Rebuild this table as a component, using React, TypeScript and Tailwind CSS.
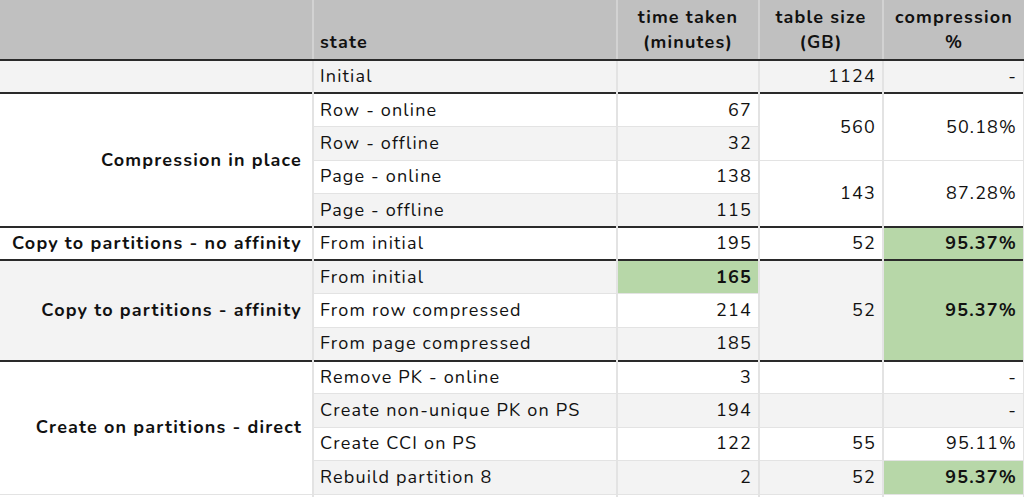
import React from "react";

type Cell = {
  text?: string;
  rowSpan?: number;
  green?: boolean;
  bold?: boolean;
};

type Row = {
  label?: { text: string; rowSpan: number };
  state: string;
  time?: Cell;
  size?: Cell;
  comp?: Cell;
  groupStart?: boolean;
};

const rows: Row[] = [
  { label: { text: "", rowSpan: 1 }, state: "Initial", time: { text: "" }, size: { text: "1124" }, comp: { text: "-" }, groupStart: true },
  { label: { text: "Compression in place", rowSpan: 4 }, state: "Row - online", time: { text: "67" }, size: { text: "560", rowSpan: 2 }, comp: { text: "50.18%", rowSpan: 2 }, groupStart: true },
  { state: "Row - offline", time: { text: "32" } },
  { state: "Page - online", time: { text: "138" }, size: { text: "143", rowSpan: 2 }, comp: { text: "87.28%", rowSpan: 2 } },
  { state: "Page - offline", time: { text: "115" } },
  { label: { text: "Copy to partitions - no affinity", rowSpan: 1 }, state: "From initial", time: { text: "195" }, size: { text: "52" }, comp: { text: "95.37%", green: true, bold: true }, groupStart: true },
  { label: { text: "Copy to partitions - affinity", rowSpan: 3 }, state: "From initial", time: { text: "165", green: true, bold: true }, size: { text: "52", rowSpan: 3 }, comp: { text: "95.37%", rowSpan: 3, green: true, bold: true }, groupStart: true },
  { state: "From row compressed", time: { text: "214" } },
  { state: "From page compressed", time: { text: "185" } },
  { label: { text: "Create on partitions - direct", rowSpan: 4 }, state: "Remove PK - online", time: { text: "3" }, size: { text: "" }, comp: { text: "-" }, groupStart: true },
  { state: "Create non-unique PK on PS", time: { text: "194" }, size: { text: "" }, comp: { text: "-" } },
  { state: "Create CCI on PS", time: { text: "122" }, size: { text: "55" }, comp: { text: "95.11%" } },
  { state: "Rebuild partition 8", time: { text: "2" }, size: { text: "52" }, comp: { text: "95.37%", green: true, bold: true } },
];

const line = "border-l-2 border-r-2 border-l-[#e3e3e3] border-r-[#e3e3e3]";

function NumCell({ cell, band }: { cell?: Cell; band: string }) {
  if (!cell) return null;
  const bg = cell.green ? "bg-[#b7d7a8]" : band;
  return (
    <td
      rowSpan={cell.rowSpan}
      className={`${bg} ${line} text-right pr-[6px] align-middle ${cell.bold ? "font-bold" : ""}`}
    >
      {cell.text}
    </td>
  );
}

export default function App() {
  return (
    <div className="w-[1024px] h-[497px] overflow-hidden bg-white text-[#111] font-['Nunito','Open_Sans',sans-serif] text-[18px] tracking-[0.065em]">
      <table className="w-[1024px] table-fixed border-collapse">
        <colgroup>
          <col className="w-[313px]" />
          <col className="w-[304px]" />
          <col className="w-[142px]" />
          <col className="w-[124px]" />
          <col className="w-[141px]" />
        </colgroup>
        <thead>
          <tr className="h-[60px] bg-[#c0c0c0] font-bold leading-[25px] align-bottom">
            <th className="border-r-2 border-r-[#d2d2d2] border-b-2 border-b-[#2a2a2a]" />
            <th className="text-left pl-[6px] pb-[4px] border-x-2 border-x-[#d2d2d2] border-b-2 border-b-[#2a2a2a]">state</th>
            <th className="text-center pb-[4px] border-x-2 border-x-[#d2d2d2] border-b-2 border-b-[#2a2a2a]">
              time taken
              <br />
              (minutes)
            </th>
            <th className="text-center pb-[4px] border-x-2 border-x-[#d2d2d2] border-b-2 border-b-[#2a2a2a]">
              table size
              <br />
              (GB)
            </th>
            <th className="text-center pb-[4px] border-l-2 border-l-[#d2d2d2] border-b-2 border-b-[#2a2a2a]">
              compression
              <br />
              %
            </th>
          </tr>
        </thead>
        <tbody>
          {rows.map((r, i) => {
            const band = i % 2 === 0 ? "bg-[#f3f3f3]" : "bg-white";
            const top = r.groupStart && i > 0 ? "border-t-2 border-t-[#2a2a2a]" : "border-t border-t-[#e3e3e3]";
            return (
              <tr key={i} className={`h-[33.4px] ${top}`}>
                {r.label && (
                  <td
                    rowSpan={r.label.rowSpan}
                    className={`${band} border-r-2 border-r-[#e3e3e3] text-right pr-[10px] font-bold align-middle whitespace-nowrap`}
                  >
                    {r.label.text}
                  </td>
                )}
                <td className={`${band} ${line} pl-[6px] whitespace-nowrap`}>{r.state}</td>
                <NumCell cell={r.time} band={band} />
                <NumCell cell={r.size} band={band} />
                <NumCell cell={r.comp} band={band} />
              </tr>
            );
          })}
          <tr className="h-[33px] border-t border-t-[#e3e3e3]">
            <td className="bg-white border-r-2 border-r-[#e3e3e3]" />
            <td className={`bg-white ${line}`} />
            <td className={`bg-white ${line}`} />
            <td className={`bg-white ${line}`} />
            <td className={`bg-white ${line}`} />
          </tr>
        </tbody>
      </table>
    </div>
  );
}
